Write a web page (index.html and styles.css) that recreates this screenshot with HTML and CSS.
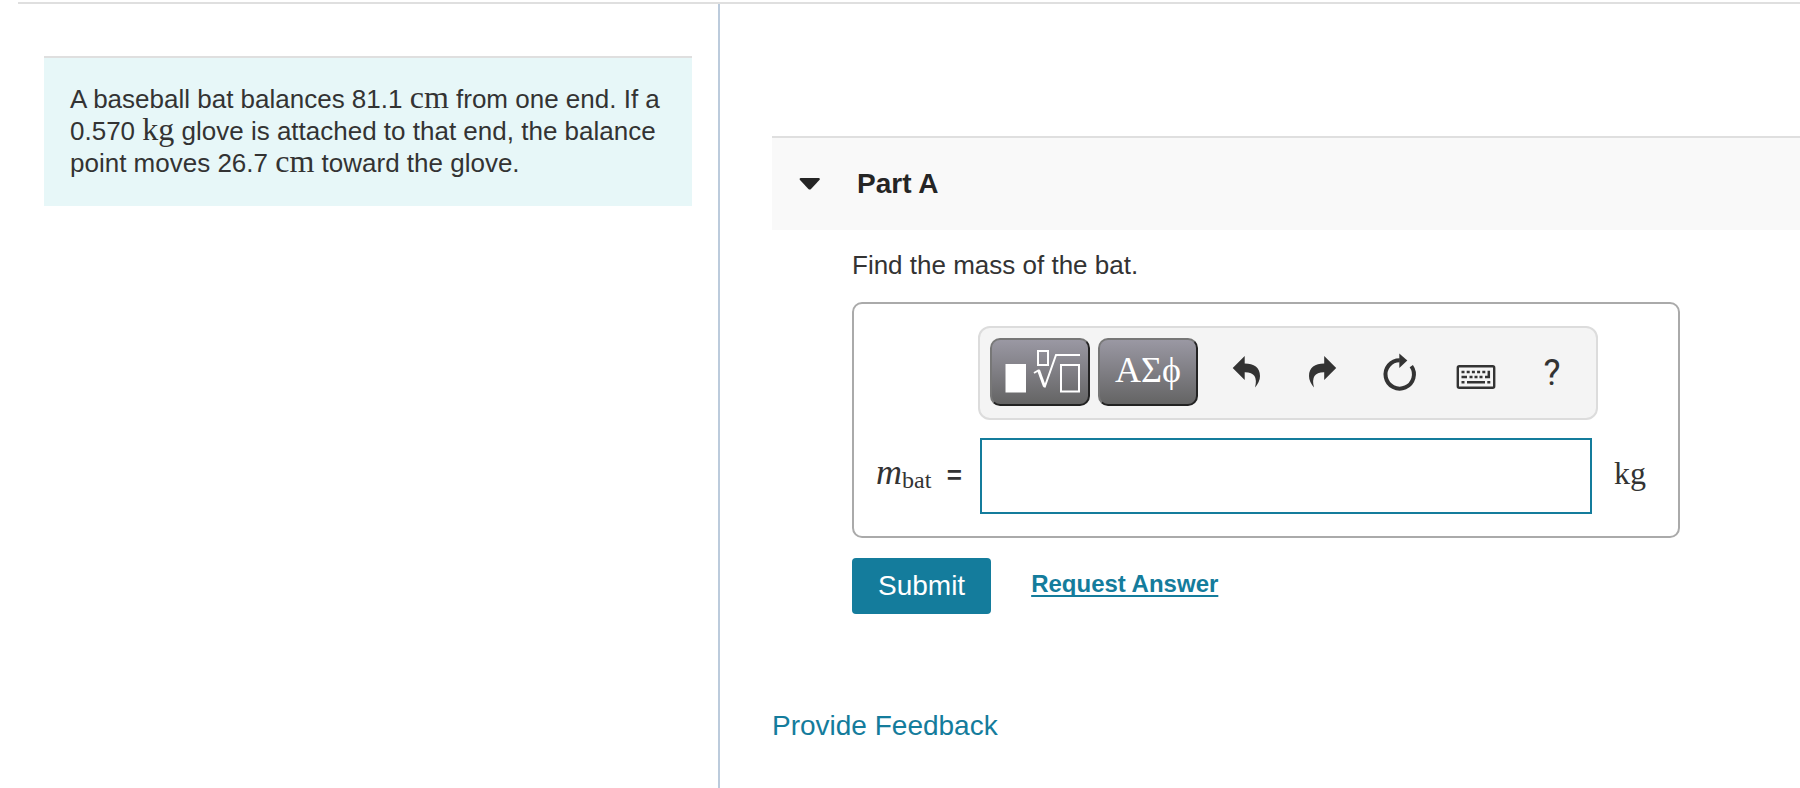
FILE: index.html
```html
<!DOCTYPE html>
<html lang="en">
<head>
<meta charset="utf-8">
<title>Part A</title>
<link rel="stylesheet" href="styles.css">
</head>
<body>
<hr class="top-rule">
<div class="layout">
  <aside class="problem-pane">
    <p class="problem">A baseball bat balances 81.1 <span class="unit">cm</span> from one end. If a 0.570 <span class="unit">kg</span> glove is attached to that end, the balance point moves 26.7 <span class="unit">cm</span> toward the glove.</p>
  </aside>
  <main class="work-pane">
    <header class="part-header">
      <button class="toggle" type="button" aria-label="Collapse Part A">
        <svg width="22" height="12" viewBox="0 0 22 12"><path d="M1.500 0h18.500q1.500 .8 .4 2L12 11q-1.300 1.200-2.600 0L1 2Q0 .6 1.500 0z" fill="#252525"/></svg>
      </button>
      <h2 class="part-title">Part A</h2>
    </header>
    <form class="part-body">
      <p class="question">Find the mass of the bat.</p>
      <div class="answer">
        <div class="toolbar" role="toolbar" aria-label="Equation tools">
          <button class="palette" type="button" aria-label="Templates">
            <svg width="96" height="64" viewBox="2 2 96 64" fill="none" stroke="#fff" stroke-width="2">
              <path d="M15.500 26h20.500v28.500H15.500z" fill="#fff" stroke="none"/>
              <path d="M48 13h10v14H48zM71 27h18v26.500H71z"/>
              <path d="M44 35l5-3"/>
              <path d="M48.500 32l6 16.500" stroke-width="3"/>
              <path d="M54.500 49.500L66 17h24"/>
            </svg>
          </button>
          <button class="palette symbols" type="button" aria-label="Symbols">ΑΣϕ</button>
          <div class="tools">
            <button class="tool" type="button" aria-label="Undo">
              <svg width="36" height="42" viewBox="29 32 36 42"><path d="M32.700 48L44.700 36v7.500C54 43.500 60 47.500 60 56q0 5.500-5 11.500Q59 52 44.700 52.200V60z"/></svg>
            </button>
            <button class="tool" type="button" aria-label="Redo">
              <svg width="36" height="42" viewBox="106 32 36 42"><path d="M137.200 48L125.200 36v7.500C116 43.500 110 47.500 110 56q0 5.500 5 11.500Q111 52 125.200 52.200V60z"/></svg>
            </button>
            <button class="tool" type="button" aria-label="Reset">
              <svg width="36" height="42" viewBox="182 32 36 42"><path d="M211.300 46.200A14.200 14.200 0 1 1 199.800 40.200" fill="none" stroke="#333" stroke-width="4"/><path d="M199.300 33.500l8 7-8 7.500z"/></svg>
            </button>
            <button class="tool" type="button" aria-label="Keyboard shortcuts">
              <svg width="44" height="42" viewBox="54 62 44 42">
                <rect x="57.800" y="76.300" width="36.400" height="21.400" rx="1.500" fill="none" stroke="#333" stroke-width="2.400"/>
                <path d="M61.500 82H85.500" stroke="#333" stroke-width="2.500" stroke-dasharray="3 2.200" fill="none"/>
                <path d="M61.500 87H67M69.500 87h3M74.500 87h3M79.500 87h3M85 87h3.800V80.800M61.500 92.200h3M67 92.200h18M87.300 92.200h3" stroke="#333" stroke-width="2.500" fill="none"/>
              </svg>
            </button>
            <button class="tool help" type="button" aria-label="Help">?</button>
          </div>
        </div>
        <label class="answer-label" for="mass"><i class="variable">m</i><span class="subscript">bat</span><span class="equals">=</span></label>
        <input class="answer-input" id="mass" type="text" autocomplete="off">
        <span class="unit answer-unit">kg</span>
      </div>
      <div class="actions">
        <button class="submit" type="submit">Submit</button>
        <a class="request" href="#">Request Answer</a>
      </div>
    </form>
    <a class="feedback" href="#">Provide Feedback</a>
  </main>
</div>
</body>
</html>
```
FILE: styles.css
```css
* {
  box-sizing: border-box;
}

body {
  margin: 0;
  min-height: 100vh;
  display: flex;
  flex-direction: column;
  background: #fff;
  color: #333;
  font: 26px/32px "Liberation Sans", Arial, sans-serif;
}

button,
input {
  font: inherit;
  color: inherit;
}

.top-rule {
  width: auto;
  align-self: stretch;
  margin: 2px 0 0 18px;
  border: 0;
  border-top: 2px solid #dfdfdf;
}

.layout {
  flex: 1;
  display: grid;
  grid-template-columns: 2fr 3fr;
}

.problem-pane {
  padding: 52px 26px 0 44px;
  border-right: 2px solid #bccbdc;
}

.problem {
  margin: 0;
  padding: 25px 26px 27px;
  border-top: 2px solid #dfdfdf;
  background: #e7f7f8;
}

.unit {
  font-family: "Liberation Serif", "Times New Roman", serif;
  font-size: 32px;
  line-height: 1px;
}

.work-pane {
  min-width: 0;
  padding: 132px 0 0 52px;
}

.part-header {
  display: flex;
  align-items: center;
  gap: 36px;
  padding: 30px 27px;
  border-top: 2px solid #dfdfdf;
  background: #f9f9f9;
}

.toggle {
  display: flex;
  padding: 0;
  border: 0;
  background: none;
}

.part-title {
  margin: 0;
  color: #252525;
  font-size: 28px;
  line-height: 32px;
}

.part-body {
  padding: 19px 120px 0 80px;
}

.question {
  margin: 0 0 21px;
}

.answer {
  display: grid;
  grid-template-columns: 86px 1fr 32px;
  gap: 18px 16px;
  align-items: center;
  padding: 22px 32px 22px 22px;
  border: 2px solid #aaa;
  border-radius: 10px;
}

.toolbar {
  grid-column: 2;
  display: flex;
  gap: 8px;
  padding: 10px 6px 12px 10px;
  border: 2px solid #dcdcdc;
  border-radius: 12px;
  background: #f4f4f4;
}

.palette {
  display: flex;
  align-items: center;
  justify-content: center;
  width: 100px;
  height: 68px;
  padding: 0;
  border: 2px solid;
  border-color: #777 #222 #222 #777;
  border-radius: 10px;
  background: linear-gradient(#9a98a3, #646464);
  color: #fff;
}

.symbols {
  padding-bottom: 4px;
  font-family: "Liberation Serif", "Times New Roman", serif;
  font-size: 36px;
}

.tools {
  flex: 1;
  display: flex;
  padding: 2px 0 0 3px;
}

.tool {
  flex: 1;
  display: flex;
  align-items: center;
  justify-content: center;
  padding: 0;
  border: 0;
  background: none;
  fill: #333;
}

.help {
  font-family: Roboto, sans-serif;
  font-size: 36px;
}

.answer-label {
  grid-column: 1;
  display: flex;
  align-items: baseline;
  white-space: nowrap;
  font-family: "Liberation Serif", "Times New Roman", serif;
}

.variable {
  font-size: 36px;
}

.subscript {
  padding-top: 8px;
  font-size: 24px;
  align-self: center;
}

.equals {
  margin-left: auto;
  font-family: "Liberation Sans", Arial, sans-serif;
  font-weight: bold;
}

.answer-input {
  height: 76px;
  min-width: 0;
  margin: 0 6px 0 2px;
  padding: 0 16px;
  border: 2px solid #147c9c;
  border-radius: 0;
  background: #fff;
}

.answer-unit {
  padding-bottom: 6px;
}

.actions {
  display: flex;
  align-items: center;
  gap: 40px;
  margin-top: 20px;
}

.submit {
  padding: 12px 26px;
  border: 0;
  border-radius: 4px;
  background: #147c9c;
  color: #fff;
  font-size: 28px;
}

.request {
  padding-bottom: 4px;
  color: #147c9c;
  font-size: 24px;
  font-weight: bold;
  text-underline-offset: 3px;
  text-decoration-thickness: 2px;
  text-decoration-skip-ink: none;
}

.feedback {
  display: inline-block;
  margin-top: 96px;
  color: #147c9c;
  font-size: 28px;
  text-decoration: none;
}
```
